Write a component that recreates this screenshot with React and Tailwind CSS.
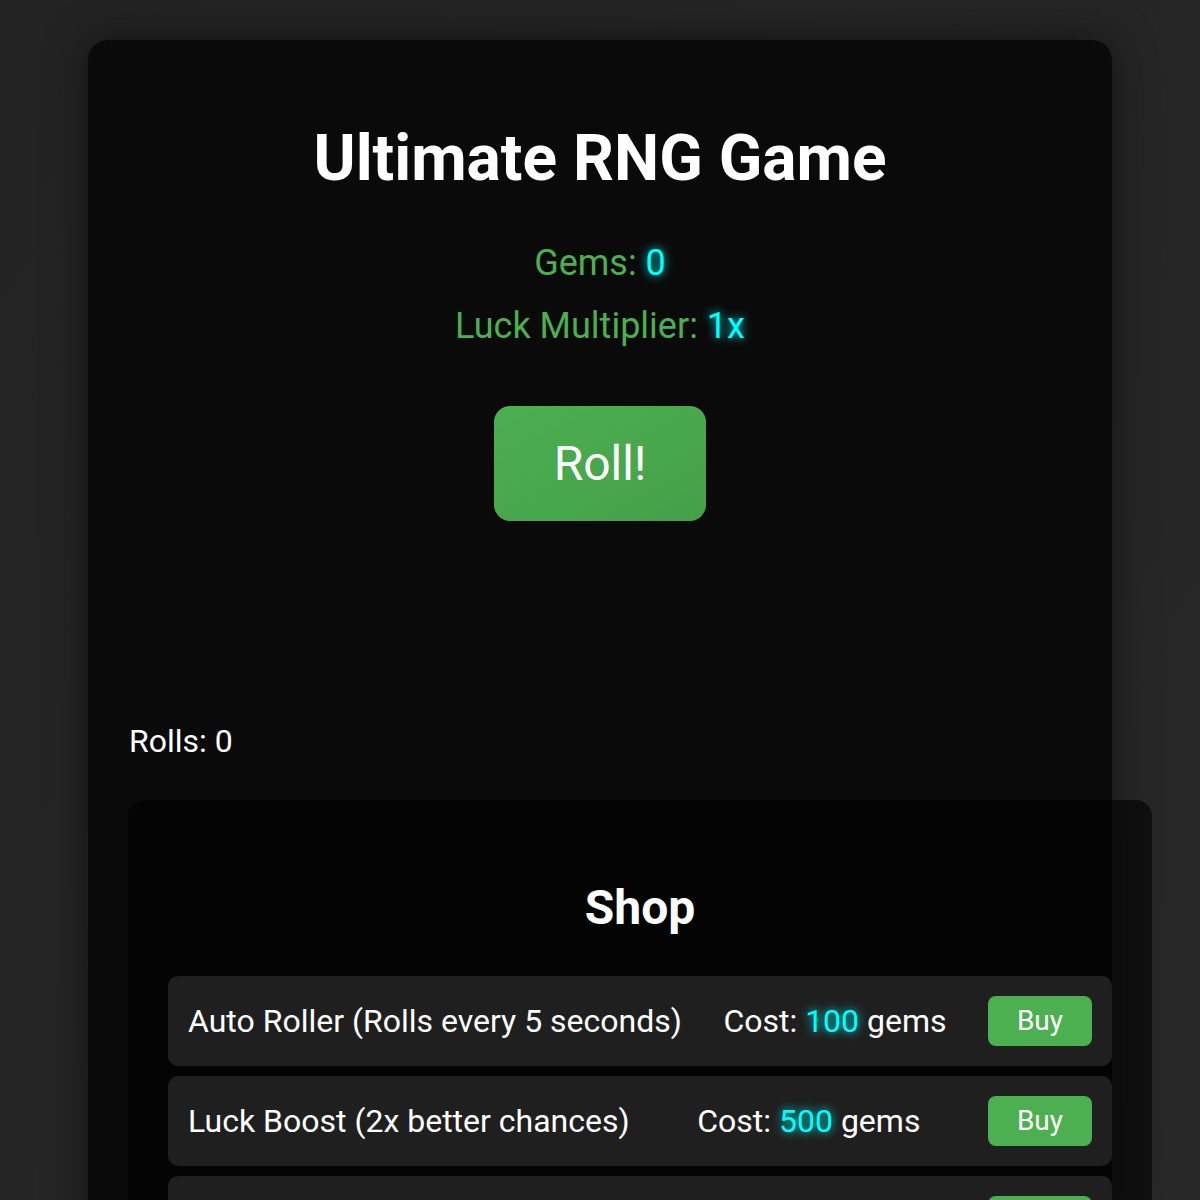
export default function App() {
  const items = [
    { name: "Auto Roller (Rolls every 5 seconds)", cost: 100 },
    { name: "Luck Boost (2x better chances)", cost: 500 },
    { name: "Super Luck (5x better chances)", cost: 2000 },
  ];
  const glow = "text-[#00ffff] [text-shadow:0_0_10px_#00ffff]";
  return (
    <div className="min-h-[1200px] bg-linear-to-br from-[#232323] to-[#282828] pt-[40px] pb-[40px] font-['Roboto',sans-serif] text-white overflow-hidden">
      <div className="mx-auto w-[1024px] rounded-[20px] bg-[#0a0a0a] p-[40px] shadow-[0_0_40px_rgba(0,0,0,0.5)]">
        <h1 className="mt-[41px] text-center text-[64px] leading-[75px] font-bold">Ultimate RNG Game</h1>
        <p className="mt-[46px] text-center text-[36px] leading-[42px] text-[#4caf50]">
          Gems: <span className={glow}>0</span>
        </p>
        <p className="mt-[21px] text-center text-[36px] leading-[42px] text-[#4caf50]">
          Luck Multiplier: <span className={glow}>1x</span>
        </p>
        <div className="mt-[59px] flex justify-center">
          <button className="h-[115px] w-[212px] rounded-[16px] bg-linear-to-br from-[#4caf50] to-[#45a049] text-[48px] leading-[56px] text-white">Roll!</button>
        </div>
        <div className="h-[201px]" />
        <p className="pl-px text-[32px] leading-[38px]">Rolls: 0</p>
        <div className="mt-[40px] w-[1024px] rounded-[16px] bg-black/60 p-[40px]">
          <h2 className="mt-[40px] text-center text-[48px] leading-[56px] font-bold">Shop</h2>
          <div className="mt-[40px] flex flex-col gap-[10px]">
            {items.map((it) => (
              <div key={it.name} className="flex h-[90px] items-center justify-between rounded-[10px] bg-[#1f1f1f] px-[20px]">
                <span className="text-[32px] leading-[38px]">{it.name}</span>
                <span className="text-[32px] leading-[38px]">
                  Cost: <span className={glow}>{it.cost}</span> gems
                </span>
                <button className="h-[50px] w-[104px] rounded-[8px] bg-[#4caf50] text-[28px] leading-[32px] text-white">Buy</button>
              </div>
            ))}
          </div>
        </div>
      </div>
    </div>
  );
}
